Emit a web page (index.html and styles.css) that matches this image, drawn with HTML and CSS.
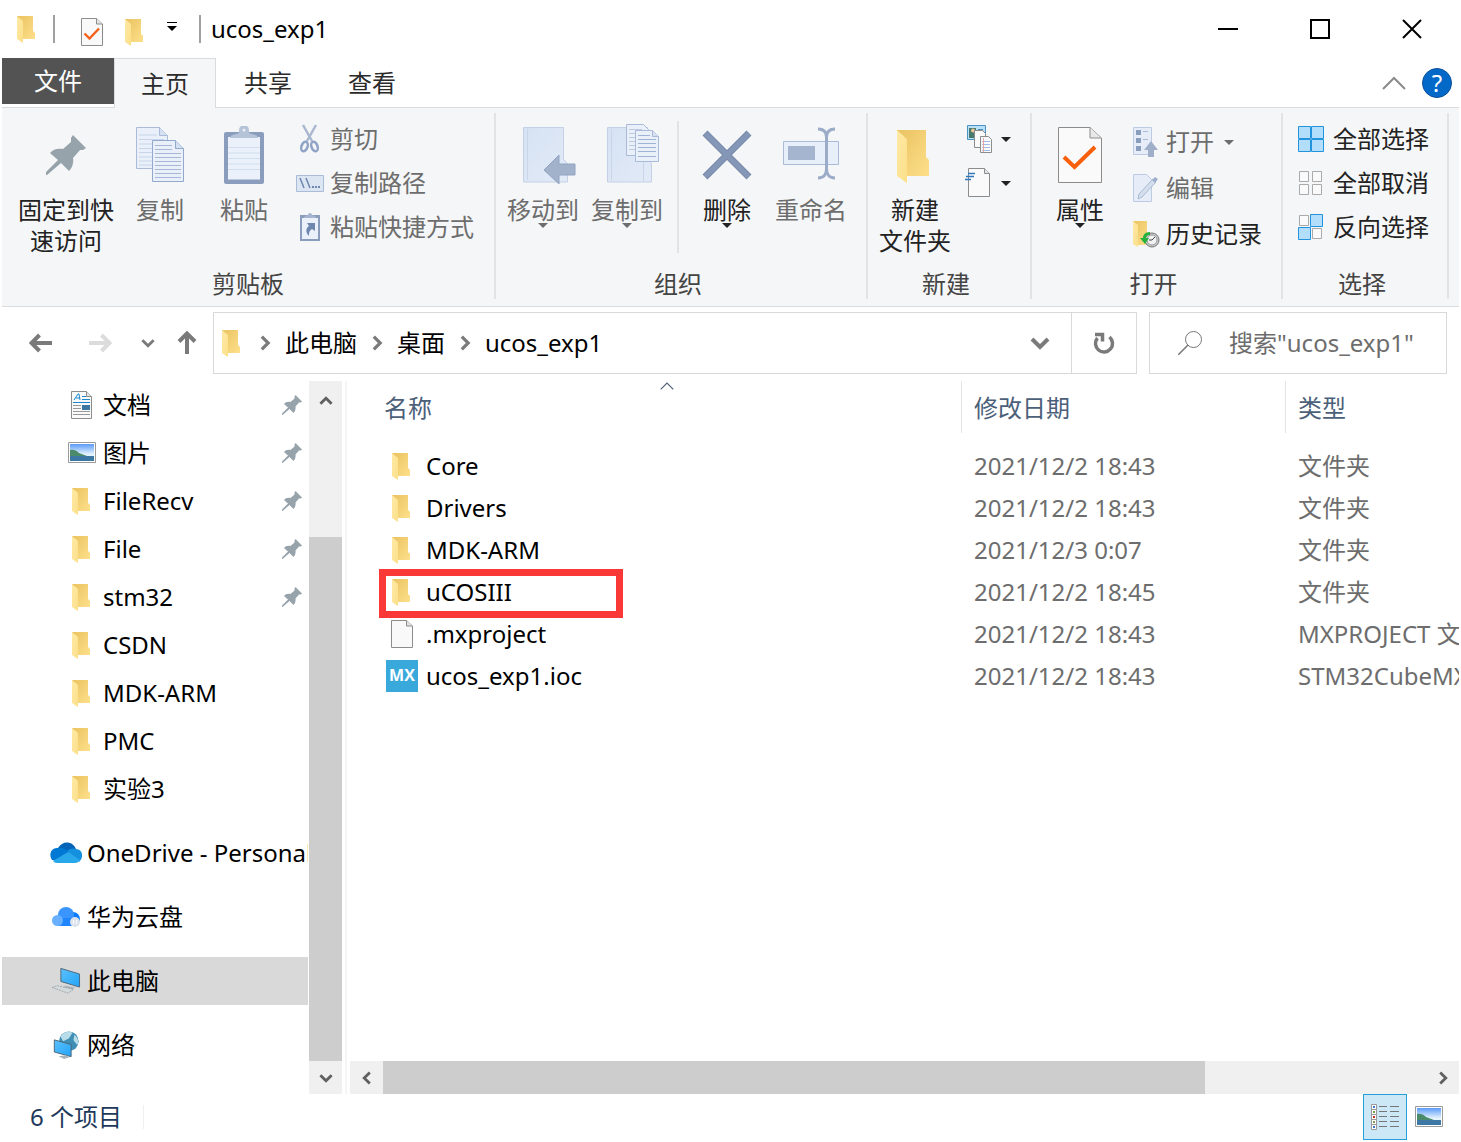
FILE: index.html
```html
<!doctype html>
<html lang="zh-CN">
  <head>
    <meta charset="utf-8">
    <link rel="stylesheet" href="styles.css">

    <title>ucos_exp1</title>
  </head>
  <body>
    <svg class="sprite" aria-hidden="true">
      <defs>
        <linearGradient id="g-folder" x1="0" y1="0" x2="1" y2="1">
          <stop offset="0" stop-color="#eac261"/>
          <stop offset="1" stop-color="#fde08a"/>
        </linearGradient>
        <linearGradient id="g-flap" x1="0" y1="0" x2="1" y2="1">
          <stop offset="0" stop-color="#ffe9a6"/>
          <stop offset="1" stop-color="#fbdf88"/>
        </linearGradient>
        <linearGradient id="g-blue" x1="0" y1="0" x2="1" y2="1">
          <stop offset="0" stop-color="#d6e2f3"/>
          <stop offset="1" stop-color="#e2eaf7"/>
        </linearGradient>
        <linearGradient id="g-screen" x1="0" y1="0" x2="1" y2="1">
          <stop offset="0" stop-color="#5cc0fb"/>
          <stop offset="1" stop-color="#22a4f8"/>
        </linearGradient>
        <linearGradient id="g-sky" x1="0" y1="0" x2="0" y2="1">
          <stop offset="0" stop-color="#5b9bf8"/>
          <stop offset=".6" stop-color="#e4f3fd"/>
        </linearGradient>
      </defs>
      <symbol id="folder" viewBox="0 0 20 28">
        <path d="M0 1h16v15l2 2v6H5z" fill="url(#g-folder)"/>
        <path d="M0 1l6 5v22L0 24z" fill="url(#g-flap)"/>
      </symbol>
      <symbol id="folder-big" viewBox="0 0 36 56">
        <path d="M0 3h29v27l3 3v16H8z" fill="url(#g-folder)"/>
        <path d="M0 3l10 9v44L0 49z" fill="url(#g-flap)"/>
      </symbol>
      <symbol id="sheet" viewBox="0 0 22 28">
        <path d="M.5.5h15l6 5.500v21.500H.5z" fill="#f9f9f9" stroke="#8c8c8c"/>
        <path d="M15.500.5V6h6" fill="#e4e4e4" stroke="#8c8c8c"/>
      </symbol>
      <symbol id="check-sheet" viewBox="0 0 22 28">
        <path d="M.5.5h15l6 5.500v21.500H.5z" fill="#f9f9f9" stroke="#8c8c8c"/>
        <path d="M15.500.5V6h6" fill="#e4e4e4" stroke="#8c8c8c"/>
        <path d="M3.500 15.500l5 5L18 10.500" fill="none" stroke="#f4611a" stroke-width="2.400"/>
      </symbol>
      <symbol id="check-sheet-big" viewBox="0 0 44 56">
        <path d="M.5.5H32L43.500 11v44.500H.5z" fill="#fafafa" stroke="#8c8c8c"/>
        <path d="M32 .5V11h11" fill="#e8e8e8" stroke="#8c8c8c"/>
        <path d="M6 30l10.500 10L37 20" fill="none" stroke="#f85f0b" stroke-width="4"/>
      </symbol>
      <symbol id="pin" viewBox="0 0 40 40">
        <path d="M27 0L40 13l-3 2h-3l-7 8c1 5-1 10-4 13l-8-8L1 40H0v-3l12-12-8-7c3-4 8-5 13-4l8-7V3z" fill="#97a3aa"/>
      </symbol>
      <symbol id="copy" viewBox="0 0 48 56">
        <g fill="#e9f0fa" stroke="#a9bbd8">
          <path d="M.5.5h23l8 8v33H.5z"/>
          <path d="M23.500.5v8h8" fill="#d5e0f0"/>
        </g>
        <path d="M3 8h18M3 12.500h25M3 17h25M3 21.500h25M3 25.500h25M3 30h25M3 34h25M3 38h25" stroke="#c8d5e8"/>
        <g fill="#e9f0fa" stroke="#93a9cb">
          <path d="M16.500 13.500h23l8 8v33h-31z"/>
          <path d="M39.500 13.500v8h8" fill="#d5e0f0"/>
        </g>
        <path d="M19 18.500h17M19 22.500h17M19 26.500h26M19 30.500h26M19 34.500h26M19 38.500h26M19 42.500h26M19 46.500h26M19 50.500h26" stroke="#a6b8d5"/>
      </symbol>
      <symbol id="paste" viewBox="0 0 42 58">
        <rect x="1" y="6" width="40" height="52" rx="2" fill="#8b9dbd"/>
        <path d="M5 11h32v42.500H5z" fill="#eaf1fb"/>
        <path d="M5 21.500h32M5 27h32M5 32.500h32M5 38h32M5 43.500h32" stroke="#d2dded"/>
        <path d="M7 12h28c-1-4-5-3-9-5V4a5 5 0 0 0-10 0v3c-4 2-8 1-9 5z" fill="#b5c3d9"/>
        <circle cx="21" cy="4" r="1.500" fill="#eaf1fb"/>
      </symbol>
      <symbol id="cut" viewBox="0 0 28 28">
        <path d="M7 0l9 16M20 0l-9 16" stroke="#a9b8d0" stroke-width="2.500"/>
        <ellipse cx="8.500" cy="21.500" rx="3" ry="5" transform="rotate(20 8.500 21.500)" fill="none" stroke="#8fa3c6" stroke-width="2.500"/>
        <ellipse cx="18.500" cy="21.500" rx="3" ry="5" transform="rotate(-20 18.500 21.500)" fill="none" stroke="#8fa3c6" stroke-width="2.500"/>
      </symbol>
      <symbol id="path" viewBox="0 0 28 28">
        <path d="M.5 6.500h27v16H.5z" fill="#dce5f2" stroke="#a9bbd8"/>
        <path d="M4 9l4 10M10 9l4 10" stroke="#6f86ae" stroke-width="1.500"/>
        <path d="M16 17h2v2h-2zM19 17h2v2h-2zM22 17h2v2h-2z" fill="#6f86ae"/>
      </symbol>
      <symbol id="paste-link" viewBox="0 0 28 28">
        <path d="M4 2h20v26H4z" fill="#8b9dbd"/>
        <path d="M6 5h16v21H6z" fill="#eaf1fb"/>
        <path d="M8 5h12c0-2-2-2-4-3a2 2 0 0 0-4 0C10 3 8 3 8 5z" fill="#a6b5cf"/>
        <path d="M11 10h8v8l-3-2c-3 2-3 4-3 7-4-4-3-8 0-10z" fill="#6f86ae"/>
      </symbol>
      <symbol id="move-to" viewBox="0 0 56 62">
        <path d="M3.500 3.500h40v32l4 4v18.500h-44z" fill="url(#g-blue)" stroke="#c3d0e5"/>
        <path d="M7.500 5v51" stroke="#c9d6ea"/>
        <path d="M24 46l15-15v9h16v11H39v9z" fill="#a3b2cb" stroke="#93a4c3"/>
      </symbol>
      <symbol id="copy-to" viewBox="0 0 56 62">
        <path d="M3.500 3.500h40v32l4 4v18.500h-44z" fill="url(#g-blue)" stroke="#c3d0e5"/>
        <path d="M7.500 5v51M39.500 38v20" stroke="#c9d6ea"/>
        <path d="M22.500.5h17l5 5v26h-22z" fill="#e9f0fa" stroke="#a9bbd8"/>
        <path d="M25 5.500h13M25 9.500h13M25 13.500h13M25 17.500h6M25 21.500h6M25 25.500h6" stroke="#bccbe2"/>
        <path d="M31.500 6.500h17l6 6v25h-23z" fill="#e9f0fa" stroke="#a9bbd8"/>
        <path d="M48.500 6.500v6h6" fill="#d5e0f0" stroke="#a9bbd8"/>
        <path d="M34 11.500h12M34 15.500h18M34 19.500h18M34 23.500h18M34 27.500h18M34 32.500h18" stroke="#9fb3d3"/>
      </symbol>
      <symbol id="delete" viewBox="0 0 50 50">
        <path d="M3 3l44 44M47 3L3 47" stroke="#7789ac" stroke-width="7"/>
        <path d="M3.500 3.500l43 43M46.500 3.500l-43 43" stroke="#8597b6" stroke-width="5"/>
      </symbol>
      <symbol id="rename" viewBox="0 0 56 56">
        <path d="M.5 14.500h55v23H.5z" fill="#e7effb" stroke="#a9bbd8"/>
        <path d="M5 19h27v14H5z" fill="#a6b5cf"/>
        <path d="M35 2c6 0 8.500 3 8.500 8v32c0 5-2.500 9-8.500 9M52 2c-6 0-8.500 3-8.500 8M43.500 42c0 5 2.500 9 8.500 9" fill="none" stroke="#9babc8" stroke-width="3"/>
      </symbol>
      <symbol id="new-item" viewBox="0 0 28 28">
        <path d="M2.500.5h18v14h-18z" fill="#b9e0f7" stroke="#4a93c4"/>
        <path d="M4 13V3h7v10z" fill="#477a6a"/>
        <circle cx="8" cy="5.500" r="2" fill="#efc49c"/>
        <path d="M13 4.500h5" stroke="#4a93c4"/>
        <path d="M9.500 5.500h8l3 3v14h-11z" fill="#fafafa" stroke="#8c8c8c"/>
        <path d="M15.500 11.500h8l3 3v13h-11z" fill="#fafafa" stroke="#8c8c8c"/>
        <path d="M17 16.500h8M17 19.500h8M17 22.500h8M17 25.500h8" stroke="#9dbce8"/>
        <path d="M18.500 13v14" stroke="#eaa6a6"/>
      </symbol>
      <symbol id="easy-access" viewBox="0 0 28 32">
        <path d="M3.500 1.500h16l5 5v23h-21z" fill="#fafafa" stroke="#8c8c8c"/>
        <path d="M19.500 1.500v5h5" fill="#e4e4e4" stroke="#8c8c8c"/>
        <path d="M3 6.500h7M1 9.500h8M0 12.500h6" stroke="#2f78bd" stroke-width="1.500"/>
      </symbol>
      <symbol id="open" viewBox="0 0 28 32">
        <path d="M1.500 1.500h18v27h-18z" fill="#e6edf8" stroke="#bccbe2"/>
        <path d="M4 4h5v5H4zM4 12h5v5H4zM4 20h5v5H4z" fill="#8b9dbd"/>
        <path d="M11 5.500h5M11 13.500h5" stroke="#a9bbd8"/>
        <path d="M12 24l7-9 7 9h-4v7h-6v-7z" fill="#9fafca"/>
      </symbol>
      <symbol id="edit" viewBox="0 0 28 28">
        <path d="M1.500.5h13l5 5v22h-18z" fill="#e6edf8" stroke="#bccbe2"/>
        <path d="M6 25l1-5L21 5l3 3L10 23z" fill="#d4deed" stroke="#a9b9d3"/>
        <path d="M20 6l3-3 3 2-3 4z" fill="#9fafca"/>
      </symbol>
      <symbol id="history" viewBox="0 0 28 28">
        <path d="M1 1h14v24H6z" fill="url(#g-folder)"/>
        <path d="M1 1l5 4v22l-5-3z" fill="url(#g-flap)"/>
        <circle cx="20" cy="20" r="7" fill="#c9cccd" stroke="#777"/>
        <circle cx="20" cy="20" r="5" fill="#f2f2f2" stroke="#999"/>
        <path d="M20 20l3-3M20 20h-3" stroke="#444"/>
        <path d="M18 12c-5 0-7 3-7 6H8l5 6 4-6h-3c0-2 1-3 4-3z" fill="#27b13c"/>
      </symbol>
      <symbol id="select-all" viewBox="0 0 28 28">
        <path d="M1.500 1.500h12v12h-12zM14.500 1.500h12v12h-12zM1.500 14.500h12v12h-12zM14.500 14.500h12v12h-12z" fill="#b3defb" stroke="#2493dd"/>
      </symbol>
      <symbol id="select-none" viewBox="0 0 28 28">
        <path d="M2.500 2.500h9v10h-9zM15.500 2.500h9v10h-9zM2.500 15.500h9v10h-9zM15.500 15.500h9v10h-9z" fill="#fafafa" stroke="#aaa"/>
      </symbol>
      <symbol id="select-invert" viewBox="0 0 28 28">
        <path d="M2.500 2.500h9v10h-9zM15.500 15.500h9v10h-9z" fill="#fafafa" stroke="#aaa"/>
        <path d="M13.500 1.500h12v12h-12zM1.500 14.500h12v12h-12z" fill="#b3defb" stroke="#2493dd"/>
      </symbol>
      <symbol id="document" viewBox="0 0 28 28">
        <path d="M3.500.5h15l5 5v22h-20z" fill="#fafafa" stroke="#8c8c8c"/>
        <path d="M18.500.5v5h5" fill="#e4e4e4" stroke="#8c8c8c"/>
        <path d="M6 9l4-6h1l1 6M8 7h4M14 5.500h4M14 8.500h8M5 11.500h17" fill="none" stroke="#1a86d0"/>
        <path d="M5 14.500h8M5 17.500h8M5 20.500h17M5 23.500h17" stroke="#999"/>
        <path d="M14 14h8v5h-8z" fill="#3d78a5"/>
      </symbol>
      <symbol id="picture" viewBox="0 0 28 22">
        <path d="M.5.5h27v20H.5z" fill="#fff" stroke="#9a9a9a"/>
        <path d="M2 2h24v17H2z" fill="url(#g-sky)"/>
        <path d="M2 8c4-1 7 1 9 3l8 3h7v1H2z" fill="#4b8a6b"/>
        <path d="M2 14h24v5H2z" fill="#3d78a5"/>
      </symbol>
      <symbol id="onedrive" viewBox="0 0 32 22">
        <path d="M8 6c4-7 14-8 18 1l-9 6z" fill="#0364b8"/>
        <path d="M2 18C-2 12 2 5 8 6c4-1 7 1 10 3l-9 10z" fill="#0078d4"/>
        <path d="M17 9c3-3 7-3 9-2 7 0 8 9 3 13z" fill="#1490df"/>
        <path d="M3 19l15-9 12 8c-1 2-3 3-5 3H7c-2 0-3-1-4-2z" fill="#28a8ea"/>
      </symbol>
      <symbol id="huawei" viewBox="0 0 32 22">
        <circle cx="23" cy="13" r="7" fill="#0a7cff"/>
        <circle cx="16" cy="9" r="8" fill="#3b95ff"/>
        <path d="M8 12h16v8H8z" fill="#1f86ff"/>
        <circle cx="7.500" cy="14.500" r="5.500" fill="#69b0ff"/>
        <circle cx="25" cy="16" r="5" fill="#dce3ec"/>
        <path d="M23.500 14v4M26.500 14v4" stroke="#fff"/>
      </symbol>
      <symbol id="computer" viewBox="0 0 32 30">
        <path d="M10.500 1.500l20 6v14l-20-6z" fill="url(#g-screen)" stroke="#4c6374"/>
        <path d="M15 20l11 2-4 2-9-2z" fill="#aab4bb"/>
        <path d="M1 22l6-2 17 4-6 4z" fill="#d4d9dc" stroke="#9ba4aa" stroke-dasharray="2 1"/>
      </symbol>
      <symbol id="network" viewBox="0 0 32 30">
        <circle cx="19" cy="11" r="10.500" fill="#3f8fb5"/>
        <path d="M10 6c4-6 10-6 13-4l-4 6-6 3zM25 4c4 3 5 8 3 11l-4-5z" fill="#b9dce9"/>
        <path d="M3.500 9.500l18 5v13l-18-5z" fill="url(#g-screen)" stroke="#4c6374"/>
        <path d="M8 27l8-1 4 2-6 2z" fill="#aab4bb"/>
      </symbol>
      <symbol id="chev-down" viewBox="0 0 20 20">
        <path d="M2 6l8 8 8-8" fill="none" stroke="currentColor" stroke-width="4"/>
      </symbol>
      <symbol id="chev-right" viewBox="0 0 20 20">
        <path d="M6 2l8 8-8 8" fill="none" stroke="currentColor" stroke-width="4"/>
      </symbol>
      <symbol id="chev-up" viewBox="0 0 20 20">
        <path d="M2 14l8-8 8 8" fill="none" stroke="currentColor" stroke-width="4"/>
      </symbol>
      <symbol id="chev-left" viewBox="0 0 20 20">
        <path d="M14 2l-8 8 8 8" fill="none" stroke="currentColor" stroke-width="4"/>
      </symbol>
      <symbol id="thin-up" viewBox="0 0 24 14">
        <path d="M1 13L12 2l11 11" fill="none" stroke="currentColor" stroke-width="2"/>
      </symbol>
      <symbol id="arrow" viewBox="0 0 24 24">
        <path d="M23 12H3M10.500 4L2.500 12l8 8" fill="none" stroke="currentColor" stroke-width="4"/>
      </symbol>
    </svg>

    <div id="window">
      <header class="title-bar">
        <svg class="folder"><use href="#folder"/></svg>
        <span class="title-sep"></span>
        <button class="quick" aria-label="属性"><svg class="sheet"><use href="#check-sheet"/></svg></button>
        <button class="quick" aria-label="新建文件夹"><svg class="folder"><use href="#folder"/></svg></button>
        <button class="quick quick-menu" aria-label="自定义快速访问工具栏"><span class="caret"></span></button>
        <span class="title-sep"></span>
        <h1>ucos_exp1</h1>
        <div class="window-buttons">
          <button aria-label="最小化"><svg viewBox="0 0 20 20"><path d="M0 10h20"/></svg></button>
          <button aria-label="最大化"><svg viewBox="0 0 20 20"><path d="M1 1h18v18H1z"/></svg></button>
          <button aria-label="关闭"><svg viewBox="0 0 20 20"><path d="M1 1l18 18M19 1L1 19"/></svg></button>
        </div>
      </header>

      <nav class="tabs">
        <button class="tab file">文件</button>
        <button class="tab active">主页</button>
        <button class="tab">共享</button>
        <button class="tab">查看</button>
        <div class="tab-tools">
          <button aria-label="最小化功能区"><svg class="collapse"><use href="#thin-up"/></svg></button>
          <button class="help" aria-label="帮助">?</button>
        </div>
      </nav>

      <div class="ribbon">
        <section class="group clipboard">
          <div class="tools">
            <button class="big wide"><span class="pic"><svg class="i-pin"><use href="#pin"/></svg></span>固定到快<br>速访问</button>
            <button class="big" disabled><span class="pic"><svg class="i-copy"><use href="#copy"/></svg></span>复制</button>
            <button class="big" disabled><span class="pic"><svg class="i-paste"><use href="#paste"/></svg></span>粘贴</button>
            <div class="list">
              <button class="small" disabled><svg><use href="#cut"/></svg>剪切</button>
              <button class="small" disabled><svg><use href="#path"/></svg>复制路径</button>
              <button class="small" disabled><svg><use href="#paste-link"/></svg>粘贴快捷方式</button>
            </div>
          </div>
          <h2>剪贴板</h2>
        </section>
        <section class="group organize">
          <div class="tools">
            <button class="big" disabled><span class="pic"><svg class="i-move"><use href="#move-to"/></svg></span>移动到<span class="caret"></span></button>
            <button class="big" disabled><span class="pic"><svg class="i-move"><use href="#copy-to"/></svg></span>复制到<span class="caret"></span></button>
            <span class="tool-sep"></span>
            <button class="big"><span class="pic"><svg class="i-delete"><use href="#delete"/></svg></span>删除<span class="caret"></span></button>
            <button class="big" disabled><span class="pic"><svg class="i-rename"><use href="#rename"/></svg></span>重命名</button>
          </div>
          <h2>组织</h2>
        </section>
        <section class="group create">
          <div class="tools">
            <button class="big"><span class="pic"><svg class="i-new"><use href="#folder-big"/></svg></span>新建<br>文件夹</button>
            <div class="list">
              <button class="small" aria-label="新建项目"><svg><use href="#new-item"/></svg><span class="caret"></span></button>
              <button class="small" aria-label="轻松访问"><svg><use href="#easy-access"/></svg><span class="caret"></span></button>
            </div>
          </div>
          <h2>新建</h2>
        </section>
        <section class="group open">
          <div class="tools">
            <button class="big"><span class="pic"><svg class="i-props"><use href="#check-sheet-big"/></svg></span>属性<span class="caret"></span></button>
            <div class="list">
              <button class="small" disabled><svg><use href="#open"/></svg>打开<span class="caret"></span></button>
              <button class="small" disabled><svg><use href="#edit"/></svg>编辑</button>
              <button class="small"><svg><use href="#history"/></svg>历史记录</button>
            </div>
          </div>
          <h2>打开</h2>
        </section>
        <section class="group select">
          <div class="tools">
            <div class="list">
              <button class="small"><svg><use href="#select-all"/></svg>全部选择</button>
              <button class="small"><svg><use href="#select-none"/></svg>全部取消</button>
              <button class="small"><svg><use href="#select-invert"/></svg>反向选择</button>
            </div>
          </div>
          <h2>选择</h2>
        </section>
      </div>

      <div class="nav-bar">
        <div class="nav-buttons">
          <button aria-label="返回"><svg><use href="#arrow"/></svg></button>
          <button class="forward" aria-label="前进" disabled><svg><use href="#arrow"/></svg></button>
          <button class="recent" aria-label="最近位置"><svg><use href="#chev-down"/></svg></button>
          <button class="up" aria-label="上移"><svg><use href="#arrow"/></svg></button>
        </div>
        <div class="address">
          <svg class="folder"><use href="#folder"/></svg>
          <svg class="chev"><use href="#chev-right"/></svg>
          <a href="#">此电脑</a>
          <svg class="chev"><use href="#chev-right"/></svg>
          <a href="#">桌面</a>
          <svg class="chev"><use href="#chev-right"/></svg>
          <a href="#">ucos_exp1</a>
          <button class="drop" aria-label="以前的位置"><svg><use href="#chev-down"/></svg></button>
          <button class="refresh" aria-label="刷新">
            <svg viewBox="0 0 22 24"><path d="M4.500 7a8.500 8.500 0 1 0 12-1M2 3.500h7.500v7" fill="none" stroke="currentColor" stroke-width="3.500"/></svg>
          </button>
        </div>
        <label class="search">
          <svg viewBox="0 0 24 24"><circle cx="15.500" cy="8.500" r="8" fill="none" stroke="#767676"/><path d="M10 14L0 24" stroke="#767676" stroke-width="1.500"/></svg>
          <input type="text" placeholder='搜索"ucos_exp1"' aria-label="搜索">
        </label>
      </div>

      <main>
        <nav class="sidebar">
          <a href="#"><svg><use href="#document"/></svg><span>文档</span><svg class="pinned"><use href="#pin"/></svg></a>
          <a href="#"><svg><use href="#picture"/></svg><span>图片</span><svg class="pinned"><use href="#pin"/></svg></a>
          <a href="#"><svg><use href="#folder"/></svg><span>FileRecv</span><svg class="pinned"><use href="#pin"/></svg></a>
          <a href="#"><svg><use href="#folder"/></svg><span>File</span><svg class="pinned"><use href="#pin"/></svg></a>
          <a href="#"><svg><use href="#folder"/></svg><span>stm32</span><svg class="pinned"><use href="#pin"/></svg></a>
          <a href="#"><svg><use href="#folder"/></svg><span>CSDN</span></a>
          <a href="#"><svg><use href="#folder"/></svg><span>MDK-ARM</span></a>
          <a href="#"><svg><use href="#folder"/></svg><span>PMC</span></a>
          <a href="#"><svg><use href="#folder"/></svg><span>实验3</span></a>
          <a href="#" class="root"><svg><use href="#onedrive"/></svg><span>OneDrive - Personal</span></a>
          <a href="#" class="root"><svg><use href="#huawei"/></svg><span>华为云盘</span></a>
          <a href="#" class="root selected"><svg><use href="#computer"/></svg><span>此电脑</span></a>
          <a href="#" class="root"><svg><use href="#network"/></svg><span>网络</span></a>
        </nav>
        <div class="scroll vertical">
          <button aria-label="向上滚动"><svg><use href="#chev-up"/></svg></button>
          <span class="before"></span>
          <span class="thumb"></span>
          <button aria-label="向下滚动"><svg><use href="#chev-down"/></svg></button>
        </div>
        <div class="files">
          <table>
            <colgroup>
              <col class="col-name">
              <col class="col-date">
              <col>
            </colgroup>
            <thead>
              <tr>
                <th><div>名称<svg class="sort"><use href="#thin-up"/></svg></div></th>
                <th><div>修改日期</div></th>
                <th><div>类型</div></th>
              </tr>
            </thead>
            <tbody>
              <tr>
                <td><a href="#"><svg><use href="#folder"/></svg>Core</a></td>
                <td>2021/12/2 18:43</td>
                <td>文件夹</td>
              </tr>
              <tr>
                <td><a href="#"><svg><use href="#folder"/></svg>Drivers</a></td>
                <td>2021/12/2 18:43</td>
                <td>文件夹</td>
              </tr>
              <tr>
                <td><a href="#"><svg><use href="#folder"/></svg>MDK-ARM</a></td>
                <td>2021/12/3 0:07</td>
                <td>文件夹</td>
              </tr>
              <tr class="marked">
                <td><a href="#"><svg><use href="#folder"/></svg>uCOSIII</a></td>
                <td>2021/12/2 18:45</td>
                <td>文件夹</td>
              </tr>
              <tr>
                <td><a href="#"><svg><use href="#sheet"/></svg>.mxproject</a></td>
                <td>2021/12/2 18:43</td>
                <td>MXPROJECT 文件</td>
              </tr>
              <tr>
                <td><a href="#"><b class="mx">MX</b>ucos_exp1.ioc</a></td>
                <td>2021/12/2 18:43</td>
                <td>STM32CubeMX</td>
              </tr>
            </tbody>
          </table>
          <div class="scroll horizontal">
            <button aria-label="向左滚动"><svg><use href="#chev-left"/></svg></button>
            <span class="thumb"></span>
            <span class="after"></span>
            <button aria-label="向右滚动"><svg><use href="#chev-right"/></svg></button>
          </div>
        </div>
      </main>

      <footer>
        <span class="count">6 个项目</span>
        <div class="views">
          <button class="on" aria-label="详细信息">
            <svg viewBox="0 0 28 28">
              <path d="M.5 1.500h5v5h-5zM.5 6.500h5v5h-5zM.5 11.500h5v5h-5zM.5 16.500h5v5h-5zM.5 21.500h5v5h-5z" fill="#fff" stroke="#999"/>
              <path d="M2 3h2v2H2zM2 23h2v2H2z" fill="#3d78c5"/>
              <path d="M2 8h2v2H2zM2 18h2v2H2z" fill="#7d9a4c"/>
              <path d="M2 13h2v2H2z" fill="#b8321f"/>
              <path d="M8 3.500h8M19 3.500h9M8 8.500h8M19 8.500h9M8 13.500h8M19 13.500h9M8 18.500h8M19 18.500h9M8 23.500h8M19 23.500h9" stroke="#777"/>
            </svg>
          </button>
          <button aria-label="大图标"><svg><use href="#picture"/></svg></button>
        </div>
      </footer>
    </div>
  </body>
</html>
```

FILE: styles.css
```css
* {
  box-sizing: border-box;
}

body {
  margin: 0;
  background: #fff;
  color: #000;
  font-family: "Noto Sans", "Noto Sans CJK SC", sans-serif;
  font-size: 24px;
  line-height: 32px;
}

button {
  padding: 0;
  border: 0;
  background: none;
  color: inherit;
  font: inherit;
}

a {
  color: inherit;
  text-decoration: none;
}

h1, h2 {
  margin: 0;
  font-size: 24px;
  font-weight: normal;
}

svg {
  display: block;
  flex: none;
}

.sprite {
  position: absolute;
  width: 0;
  height: 0;
}

#window {
  display: flex;
  flex-direction: column;
  min-height: 100vh;
  padding: 0 2px;
}

.folder {
  width: 20px;
  height: 28px;
}

.sheet {
  width: 22px;
  height: 28px;
}

.caret {
  display: block;
  width: 0;
  border: 5px solid transparent;
  border-top-color: currentColor;
  border-bottom: 0;
}

/* title bar */

.title-bar {
  display: flex;
  align-items: center;
  height: 58px;
  padding-left: 15px;
}

.title-sep {
  width: 2px;
  height: 28px;
  margin-left: 16px;
  background: #a0a0a0;
}

.quick {
  margin-left: 26px;
  padding-top: 6px;
}

.quick + .quick {
  margin-left: 22px;
}

.quick-menu .caret::before {
  content: "";
  display: block;
  width: 10px;
  margin: -9px -5px 8px;
  border-top: 1px solid currentColor;
}

.quick-menu + .title-sep {
  margin-left: 22px;
}

.title-bar h1 {
  margin-left: 10px;
}

.window-buttons {
  display: flex;
  margin-left: auto;
  padding-right: 1px;
}

.window-buttons button {
  width: 92px;
  height: 58px;
}

.window-buttons svg {
  width: 20px;
  height: 20px;
  margin: auto;
  fill: none;
  stroke: #000;
  stroke-width: 2;
}

/* tabs */

.tabs {
  display: flex;
  height: 50px;
  border-bottom: 1px solid #dadbdc;
  color: #2b2b2b;
}

.tab {
  width: 104px;
  height: 50px;
}

.tab.file {
  width: 112px;
  height: 46px;
  background: #535353;
  color: #fff;
}

.tab.active {
  width: 102px;
  border: 1px solid #dadbdc;
  border-bottom: 0;
  background: #f5f6f7;
}

.tab-tools {
  display: flex;
  align-items: center;
  gap: 16px;
  margin-left: auto;
  padding-right: 7px;
  color: #8a8a8a;
}

.collapse {
  width: 24px;
  height: 14px;
}

.help {
  width: 30px;
  height: 30px;
  border: 1px solid #0a4f9c;
  border-radius: 50%;
  background: #0369c9;
  color: #fff;
  line-height: 28px;
}

/* ribbon */

.ribbon {
  display: flex;
  padding: 5px 0 7px;
  border-bottom: 1px solid #dadbdc;
  background: #f5f6f7;
  color: #222;
}

.group {
  display: flex;
  flex-direction: column;
  border-right: 2px solid #e2e3e4;
}

.group h2 {
  color: #444;
  line-height: 30px;
  text-align: center;
}

.group + .group h2 {
  padding-right: 6px;
}

.tools {
  display: flex;
  height: 156px;
}

.ribbon button:disabled {
  color: #6d6d6d;
}

.big {
  display: flex;
  flex-direction: column;
  align-items: center;
  width: 84px;
  padding-top: 10px;
  line-height: 31px;
  white-space: nowrap;
}

.big.wide {
  width: 104px;
}

.big .caret {
  margin-top: -2px;
}

.pic {
  display: flex;
  align-items: center;
  height: 64px;
  margin-bottom: 7px;
}

.i-pin {
  width: 40px;
  height: 40px;
}

.i-copy {
  width: 48px;
  height: 56px;
}

.i-paste {
  width: 42px;
  height: 58px;
}

.i-move {
  width: 56px;
  height: 62px;
  margin-left: 10px;
}

.i-delete {
  width: 50px;
  height: 50px;
}

.i-rename {
  width: 56px;
  height: 56px;
}

.i-new {
  width: 36px;
  height: 56px;
}

.i-props {
  width: 44px;
  height: 56px;
}

.tool-sep {
  width: 2px;
  height: 132px;
  margin: 8px 6px 0 8px;
  background: #e2e3e4;
}

.list {
  padding: 4px 0 0 10px;
}

.small {
  display: flex;
  align-items: center;
  gap: 6px;
  height: 44px;
  white-space: nowrap;
}

.small svg {
  width: 28px;
  height: 32px;
}

.small .caret {
  margin-left: 4px;
}

.clipboard .tools {
  padding: 0 20px 0 12px;
}

.organize .tools {
  padding: 0 13px 0 5px;
}

.create .tools {
  padding: 0 19px 0 5px;
}

.create .list {
  padding-left: 8px;
}

.create .small {
  gap: 4px;
}

.open .tools {
  padding: 0 19px 0 6px;
}

.open .list {
  padding-top: 6px;
}

.open .small {
  height: 46px;
}

.select .tools {
  padding: 0 18px 0 4px;
}

.select .small {
  gap: 8px;
}

/* address and search */

.nav-bar {
  display: flex;
  align-items: center;
  gap: 12px;
  height: 74px;
  padding: 0 12px 2px 0;
  color: #7a7a7a;
}

.nav-buttons {
  display: flex;
  align-items: center;
  justify-content: space-between;
  width: 199px;
  padding: 0 2px 0 27px;
}

.nav-buttons svg {
  width: 24px;
  height: 24px;
}

.forward svg {
  transform: scaleX(-1);
  color: #dcdcdc;
}

.up svg {
  transform: rotate(90deg);
}

.nav-buttons .recent svg {
  width: 14px;
  height: 14px;
}

.forward {
  margin-left: 15px;
}

.recent {
  margin-left: 10px;
}

.address {
  display: flex;
  flex: 1;
  align-items: center;
  height: 62px;
  padding-left: 8px;
  border: 1px solid #d9d9d9;
}

.address a {
  color: #000;
}

.chev {
  width: 16px;
  height: 16px;
  margin: 0 12px;
}

.address .folder + .chev {
  margin-left: 15px;
}

.drop {
  width: 62px;
  height: 60px;
  margin-left: auto;
}

.drop svg {
  width: 20px;
  height: 20px;
  margin: auto;
}

.refresh {
  width: 65px;
  height: 60px;
  border-left: 1px solid #d9d9d9;
}

.refresh svg {
  width: 22px;
  height: 24px;
  margin: auto;
}

.search {
  display: flex;
  align-items: center;
  gap: 27px;
  width: 298px;
  height: 62px;
  padding-left: 28px;
  border: 1px solid #d9d9d9;
}

.search svg {
  width: 24px;
  height: 24px;
}

.search input {
  flex: 1;
  min-width: 0;
  padding: 0;
  border: 0;
  outline: 0;
  background: none;
  font: inherit;
}

.search input::placeholder {
  color: #6d6d6d;
}

/* navigation pane */

main {
  display: flex;
  flex: 1;
}

.sidebar {
  width: 306px;
  overflow: hidden;
}

.sidebar a {
  display: flex;
  align-items: center;
  gap: 7px;
  height: 48px;
  padding: 0 6px 0 66px;
  white-space: nowrap;
}

.sidebar svg {
  width: 28px;
  height: 28px;
}

.sidebar .pinned {
  width: 20px;
  height: 20px;
  margin-left: auto;
}

.sidebar .root {
  gap: 5px;
  margin-top: 16px;
  padding: 0 0 0 48px;
}

.sidebar .root svg {
  width: 32px;
}

.sidebar .selected {
  background: #d9d9d9;
}

/* scroll bars */

.scroll {
  display: flex;
  background: #f0f0f0;
  color: #606060;
}

.scroll svg {
  width: 14px;
  height: 14px;
  margin: auto;
}

.scroll button {
  flex: none;
  width: 33px;
  height: 33px;
}

.thumb {
  background: #cdcdcd;
}

.vertical {
  flex-direction: column;
  width: 33px;
  margin-left: 1px;
}

.vertical button:first-child {
  height: 40px;
}

.vertical .before {
  flex: 116;
}

.vertical .thumb {
  flex: 523;
}

.horizontal {
  margin: auto 0 0 3px;
}

.horizontal .thumb {
  flex: 821;
}

.horizontal .after {
  flex: 221;
}

/* file list */

.files {
  display: flex;
  flex: 1;
  flex-direction: column;
  min-width: 0;
  margin-left: 3px;
  border-left: 2px solid #f5f5f5;
}

table {
  width: 100%;
  border-collapse: collapse;
  table-layout: fixed;
}

.col-name {
  width: 614px;
}

.col-date {
  width: 324px;
}

th {
  height: 64px;
  padding: 0;
  color: #4c607a;
  font-weight: normal;
  text-align: left;
  vertical-align: top;
}

th div {
  position: relative;
  height: 52px;
  padding-left: 12px;
  border-left: 1px solid #e5e5e5;
  line-height: 54px;
}

th:first-child div {
  padding-left: 36px;
  border-color: transparent;
}

.sort {
  position: absolute;
  top: 1px;
  left: 50%;
  width: 14px;
  height: 8px;
  margin-left: 5px;
}

td {
  height: 42px;
  padding: 0 0 0 13px;
  overflow: hidden;
  color: #6d6d6d;
  white-space: nowrap;
}

td:first-child {
  padding-left: 39px;
  color: #000;
}

td a {
  display: flex;
  align-items: center;
  gap: 8px;
}

td svg {
  width: 32px;
  height: 28px;
}

.marked td:first-child {
  position: relative;
  overflow: visible;
}

.marked td:first-child::after {
  content: "";
  position: absolute;
  top: -2px;
  left: 32px;
  box-sizing: border-box;
  width: 244px;
  height: 49px;
  border: 7px solid #fb3838;
}

.mx {
  width: 32px;
  height: 32px;
  background: #39a9dc;
  color: #fff;
  font-family: "Open Sans", sans-serif;
  font-size: 16px;
  line-height: 30px;
  text-align: center;
}

/* status bar */

footer {
  display: flex;
  align-items: center;
  justify-content: space-between;
  height: 48px;
  padding: 0 8px 2px 28px;
  color: #1e395b;
}

.count {
  padding-right: 21px;
  border-right: 1px solid #f0f0f0;
  line-height: 24px;
}

.views {
  display: flex;
}

.views button {
  width: 44px;
  height: 46px;
}

.views .on {
  border: 1px solid #26a0da;
  background: #cce8f6;
}

.views svg {
  width: 28px;
  height: 28px;
  margin: auto;
}
```
